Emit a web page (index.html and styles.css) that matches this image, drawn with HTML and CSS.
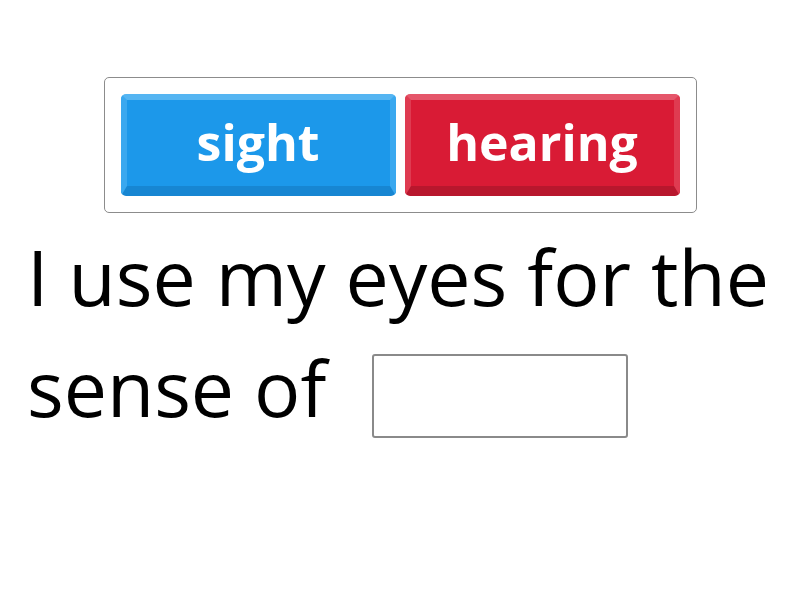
FILE: index.html
```html
<!DOCTYPE html>
<html lang="en">
<head>
<meta charset="utf-8">
<title>Type the answer</title>
<link rel="stylesheet" href="styles.css">
</head>
<body>
<main class="stage">
  <div class="options">
    <div class="tile tile-blue">sight</div>
    <div class="tile tile-red">hearing</div>
  </div>
  <p class="question">I use my eyes for the sense of <span class="answer-box"></span></p>
</main>
</body>
</html>
```
FILE: styles.css
```css
html, body {
  margin: 0;
  padding: 0;
  background: #ffffff;
}
body {
  font-family: "Open Sans", "Liberation Sans", sans-serif;
  width: 800px;
  height: 600px;
  overflow: hidden;
}
.stage {
  display: flex;
  flex-direction: column;
  align-items: center;
  padding-top: 77px;
}
.options {
  display: flex;
  gap: 9px;
  padding: 16px;
  border: 1px solid #8c8c8c;
  border-radius: 5px;
}
.tile {
  box-sizing: border-box;
  width: 275px;
  height: 102px;
  border-radius: 5px;
  border-style: solid;
  border-width: 6px 6px 10px 6px;
  display: flex;
  align-items: center;
  justify-content: center;
  color: #ffffff;
  font-weight: 700;
  font-size: 50px;
  padding-bottom: 2px;
}
.tile-blue {
  background: #1c98ea;
  border-color: #55b5f2 #3aa8ef #1786d2 #3aa8ef;
}
.tile-red {
  background: #d91b35;
  border-color: #e5566a #df3b51 #b8172d #df3b51;
}
.question {
  align-self: stretch;
  margin: 8px 0 0 0;
  padding: 0 0 0 27px;
  font-size: 77px;
  line-height: 111px;
  color: #000000;
}
.answer-box {
  display: inline-block;
  box-sizing: border-box;
  width: 256px;
  height: 84px;
  margin-left: 26px;
  border: 2px solid #8a8a8a;
  border-radius: 3px;
  vertical-align: middle;
}
```
